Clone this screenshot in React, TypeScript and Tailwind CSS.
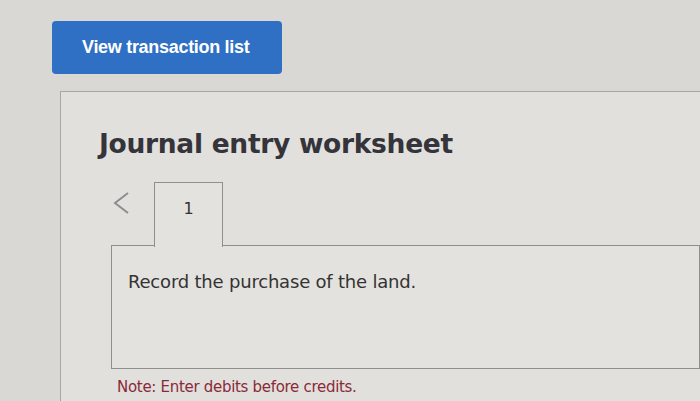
export default function App() {
  return (
    <div className="relative h-[401px] w-[700px] overflow-hidden bg-[#d9d8d4] font-['DejaVu_Sans',Verdana,sans-serif]">
      <div className="pl-[52px] pt-[21px]">
        <button className="flex h-[53px] w-[230px] items-center rounded-[4px] bg-[#2f6fc4] pl-[30px] font-['Liberation_Sans',Arial,sans-serif] text-[18px] font-bold tracking-[-0.3px] text-white">
          View transaction list
        </button>
      </div>

      <div className="ml-[60px] mt-[17px] h-[320px] border-l border-t border-[#a8a7a3] bg-[#e1e0dc] pl-[38px] pt-[35px]">
        <h2 className="text-[26.5px] font-bold leading-[34px] tracking-[-0.3px] text-[#34343a]">
          Journal entry worksheet
        </h2>

        <div className="ml-[12px] mt-[21px]">
          <div className="relative z-10 flex items-start">
            <div className="flex h-[42px] w-[43px] items-center">
              <svg width="20" height="24" viewBox="0 0 20 24" fill="none" stroke="#8d8d8d" strokeWidth="2">
                <path d="M17 2 L4 12 L17 22" />
              </svg>
            </div>
            <div className="-mb-px flex h-[65px] w-[69px] justify-center border border-b-0 border-[#8f8f8b] bg-[#e3e2de] pt-[14px] text-[16px] text-[#333]">
              1
            </div>
          </div>
          <div className="-mt-px h-[124px] border border-[#8f8f8b] bg-[#e3e2de] pl-[16px] pt-[22px] text-[18px] tracking-[-0.2px] text-[#333]">
            Record the purchase of the land.
          </div>
          <div className="pl-[6px] pt-[7px] text-[15px] tracking-[-0.3px] text-[#8a2a38]">
            Note: Enter debits before credits.
          </div>
        </div>
      </div>
    </div>
  );
}
